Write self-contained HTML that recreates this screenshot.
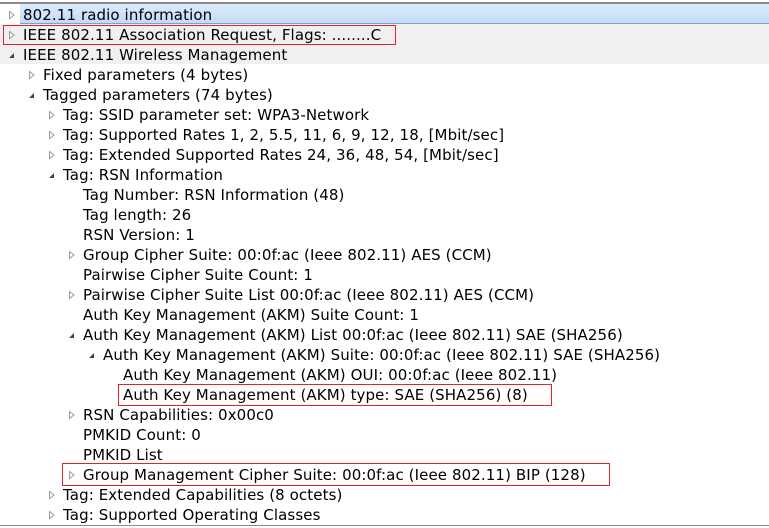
<!DOCTYPE html>
<html><head><style>
html,body{margin:0;padding:0;}
body{width:769px;height:528px;background:#fff;position:relative;overflow:hidden;font-family:"DejaVu Sans","Liberation Sans",sans-serif;font-size:15px;letter-spacing:0.1px;color:#000;}
.r{position:absolute;left:0;width:769px;height:20px;line-height:22px;white-space:nowrap;}
.t{position:absolute;top:0;}
svg{position:absolute;top:6px;}
.box{position:absolute;border:1px solid #e0242c;}
</style></head><body>
<div style="position:absolute;left:0;top:2px;width:769px;height:2px;background:#8a8a8a"></div>
<div style="position:absolute;left:0;top:24px;width:769px;height:40px;background:#f0f0f0"></div>
<div style="position:absolute;left:20px;top:4px;width:749px;height:19px;background:linear-gradient(#dcebfc,#c2dcf7);border-bottom:1px solid #7d9fd0"></div>

<div class="r" style="top:4px"><svg style="left:8px" width="8" height="10"><path d="M1.5 1.5 L6 5 L1.5 8.5 Z" fill="#fff" stroke="#999"/></svg><span class="t" style="left:23px">802.11 radio information</span></div>
<div class="r" style="top:24px"><svg style="left:8px" width="8" height="10"><path d="M1.5 1.5 L6 5 L1.5 8.5 Z" fill="#fff" stroke="#999"/></svg><span class="t" style="left:23px">IEEE 802.11 Association Request, Flags: ........C</span></div>
<div class="r" style="top:44px"><svg style="left:7px" width="8" height="10"><path d="M7 3 L7 8 L2 8 Z" fill="#444"/></svg><span class="t" style="left:23px">IEEE 802.11 Wireless Management</span></div>
<div class="r" style="top:64px"><svg style="left:28px" width="8" height="10"><path d="M1.5 1.5 L6 5 L1.5 8.5 Z" fill="#fff" stroke="#999"/></svg><span class="t" style="left:43px">Fixed parameters (4 bytes)</span></div>
<div class="r" style="top:84px"><svg style="left:27px" width="8" height="10"><path d="M7 3 L7 8 L2 8 Z" fill="#444"/></svg><span class="t" style="left:43px">Tagged parameters (74 bytes)</span></div>
<div class="r" style="top:104px"><svg style="left:48px" width="8" height="10"><path d="M1.5 1.5 L6 5 L1.5 8.5 Z" fill="#fff" stroke="#999"/></svg><span class="t" style="left:63px">Tag: SSID parameter set: WPA3-Network</span></div>
<div class="r" style="top:124px"><svg style="left:48px" width="8" height="10"><path d="M1.5 1.5 L6 5 L1.5 8.5 Z" fill="#fff" stroke="#999"/></svg><span class="t" style="left:63px">Tag: Supported Rates 1, 2, 5.5, 11, 6, 9, 12, 18, [Mbit/sec]</span></div>
<div class="r" style="top:144px"><svg style="left:48px" width="8" height="10"><path d="M1.5 1.5 L6 5 L1.5 8.5 Z" fill="#fff" stroke="#999"/></svg><span class="t" style="left:63px">Tag: Extended Supported Rates 24, 36, 48, 54, [Mbit/sec]</span></div>
<div class="r" style="top:164px"><svg style="left:47px" width="8" height="10"><path d="M7 3 L7 8 L2 8 Z" fill="#444"/></svg><span class="t" style="left:63px">Tag: RSN Information</span></div>
<div class="r" style="top:184px"><span class="t" style="left:83px">Tag Number: RSN Information (48)</span></div>
<div class="r" style="top:204px"><span class="t" style="left:83px">Tag length: 26</span></div>
<div class="r" style="top:224px"><span class="t" style="left:83px">RSN Version: 1</span></div>
<div class="r" style="top:244px"><svg style="left:68px" width="8" height="10"><path d="M1.5 1.5 L6 5 L1.5 8.5 Z" fill="#fff" stroke="#999"/></svg><span class="t" style="left:83px">Group Cipher Suite: 00:0f:ac (Ieee 802.11) AES (CCM)</span></div>
<div class="r" style="top:264px"><span class="t" style="left:83px">Pairwise Cipher Suite Count: 1</span></div>
<div class="r" style="top:284px"><svg style="left:68px" width="8" height="10"><path d="M1.5 1.5 L6 5 L1.5 8.5 Z" fill="#fff" stroke="#999"/></svg><span class="t" style="left:83px">Pairwise Cipher Suite List 00:0f:ac (Ieee 802.11) AES (CCM)</span></div>
<div class="r" style="top:304px"><span class="t" style="left:83px">Auth Key Management (AKM) Suite Count: 1</span></div>
<div class="r" style="top:324px"><svg style="left:67px" width="8" height="10"><path d="M7 3 L7 8 L2 8 Z" fill="#444"/></svg><span class="t" style="left:83px">Auth Key Management (AKM) List 00:0f:ac (Ieee 802.11) SAE (SHA256)</span></div>
<div class="r" style="top:344px"><svg style="left:87px" width="8" height="10"><path d="M7 3 L7 8 L2 8 Z" fill="#444"/></svg><span class="t" style="left:103px">Auth Key Management (AKM) Suite: 00:0f:ac (Ieee 802.11) SAE (SHA256)</span></div>
<div class="r" style="top:364px"><span class="t" style="left:123px">Auth Key Management (AKM) OUI: 00:0f:ac (Ieee 802.11)</span></div>
<div class="r" style="top:384px"><span class="t" style="left:123px">Auth Key Management (AKM) type: SAE (SHA256) (8)</span></div>
<div class="r" style="top:404px"><svg style="left:68px" width="8" height="10"><path d="M1.5 1.5 L6 5 L1.5 8.5 Z" fill="#fff" stroke="#999"/></svg><span class="t" style="left:83px">RSN Capabilities: 0x00c0</span></div>
<div class="r" style="top:424px"><span class="t" style="left:83px">PMKID Count: 0</span></div>
<div class="r" style="top:444px"><span class="t" style="left:83px">PMKID List</span></div>
<div class="r" style="top:464px"><svg style="left:68px" width="8" height="10"><path d="M1.5 1.5 L6 5 L1.5 8.5 Z" fill="#fff" stroke="#999"/></svg><span class="t" style="left:83px">Group Management Cipher Suite: 00:0f:ac (Ieee 802.11) BIP (128)</span></div>
<div class="r" style="top:484px"><svg style="left:48px" width="8" height="10"><path d="M1.5 1.5 L6 5 L1.5 8.5 Z" fill="#fff" stroke="#999"/></svg><span class="t" style="left:63px">Tag: Extended Capabilities (8 octets)</span></div>
<div class="r" style="top:504px"><svg style="left:48px" width="8" height="10"><path d="M1.5 1.5 L6 5 L1.5 8.5 Z" fill="#fff" stroke="#999"/></svg><span class="t" style="left:63px">Tag: Supported Operating Classes</span></div>
<div style="position:absolute;left:0;top:525px;width:769px;height:1px;background:#8a8a8a"></div>

<div class="box" style="left:3px;top:25px;width:391px;height:18px"></div>
<div class="box" style="left:118px;top:384px;width:432px;height:20px"></div>
<div class="box" style="left:62px;top:463px;width:546px;height:21px"></div>
</body></html>
